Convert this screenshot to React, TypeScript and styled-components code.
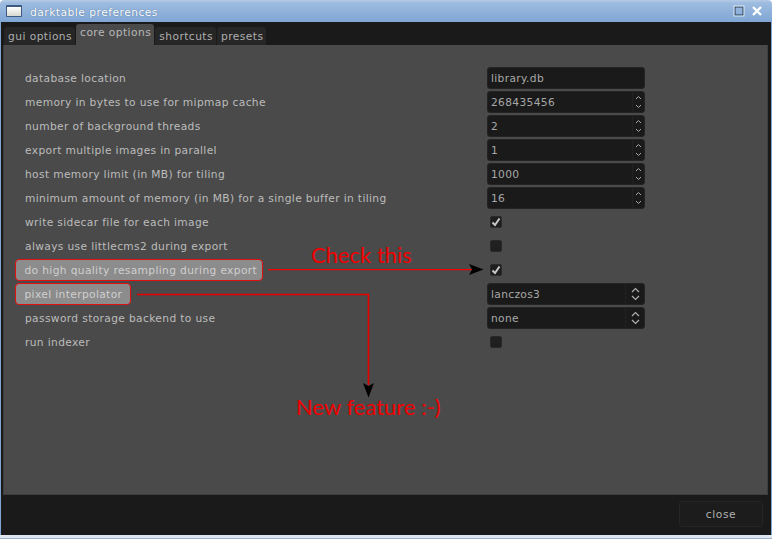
import React from "react";
import styled, { createGlobalStyle } from "styled-components";

const GlobalStyle = createGlobalStyle`
    html, body {
        margin: 0;
        padding: 0;
        background: #fff;
    }
    body {
        font-family: "DejaVu Sans", sans-serif;
    }
`;

const Window = styled.div`
    position: relative;
    width: 772px;
    height: 539px;
    display: flex;
    flex-direction: column;
    box-sizing: border-box;
    overflow: hidden;
    background: #dfe6f0;
    border-radius: 4px 4px 0 0;
`;
const TitleBar = styled.div`
    height: 22px;
    flex: none;
    display: flex;
    align-items: center;
    padding: 0 9px 0 6px;
    background: linear-gradient(#b5cbe6 0, #9dbbdf 3px, #7fa6d5 100%);
    border-radius: 4px 4px 0 0;
`;
const TitleIcon = styled.div`
    width: 14px;
    height: 9px;
    border: 1px solid #3c5a80;
    border-top-width: 2px;
    border-radius: 1px;
    background: linear-gradient(#ffffff, #d8d8d0);
    margin-right: 8px;
    margin-top: -1px;
`;
const Title = styled.span`
    flex: 1;
    font-size: 10.67px;
    letter-spacing: 0.5px;
    padding-top: 2px;
    color: #fff;
    text-shadow: 0 0 1px #3c5a80;
`;
const WinButton = styled.svg`
    width: 12px;
    height: 12px;
    margin-left: 6px;
    flex: none;
`;
const Body = styled.div`
    flex: 1;
    display: flex;
    flex-direction: column;
    background: #1a1a1a;
    border-left: 1px solid #7fa6d5;
    border-right: 1px solid #7fa6d5;
`;
const TabBar = styled.div`
    height: 22px;
    margin-top: 1px;
    padding-left: 3px;
    display: flex;
    align-items: flex-end;
`;
const Tab = styled.div<{ $active?: boolean }>`
    height: ${(p) => (p.$active ? "21px" : "18px")};
    box-sizing: border-box;
    padding: ${(p) => (p.$active ? "2px 3px 0 4px" : "3px 3px 0 4px")};
    margin-right: 1px;
    font-size: 10.67px;
    letter-spacing: 0.45px;
    line-height: 14px;
    border-radius: 3px 3px 0 0;
    color: ${(p) => (p.$active ? "#b8b8b8" : "#aeaeae")};
    background: ${(p) => (p.$active ? "#4a4a4a" : "#262626")};
    white-space: nowrap;
`;
const Panel = styled.div`
    height: 450px;
    margin: 0 3px 0 2px;
    box-sizing: border-box;
    padding: 21px 0 0 21px;
    background: #4a4a4a;
    border: 1px solid #3e3e3e;
    border-top: none;
`;
const Row = styled.div`
    height: 24px;
    display: flex;
    align-items: center;
`;
const LabelCell = styled.div`
    width: 462px;
    flex: none;
    display: flex;
    align-items: center;
`;
const Label = styled.span<{ $marked?: boolean; $tail?: number }>`
    font-size: 10.67px;
    letter-spacing: 0.36px;
    padding-top: 1px;
    color: ${(p) => (p.$marked ? "#cfcfcf" : "#bcbcbc")};
    white-space: nowrap;
    line-height: ${(p) => (p.$marked ? "19px" : "14px")};
    ${(p) =>
        p.$marked &&
        `
        background: #8c8c8c;
        border: 1.5px solid #e01010;
        border-radius: 4px;
        margin-left: -10px;
        padding-left: 8.5px;
        padding-right: ${p.$tail}px;
    `}
`;
const Field = styled.div`
    width: 158px;
    height: 22px;
    box-sizing: border-box;
    display: flex;
    align-items: center;
    background: #1a1a1a;
    border: 1px solid #242424;
    border-radius: 3px;
    font-size: 10.67px;
    letter-spacing: 0.33px;
    color: #a8a8a8;
`;
const FieldText = styled.span`
    flex: 1;
    padding-left: 3px;
`;
const Stepper = styled.svg`
    width: 11px;
    height: 20px;
    flex: none;
    border-left: 1px solid #222;
`;
const ComboArrows = styled.svg`
    width: 18px;
    height: 20px;
    flex: none;
    border-left: 1px solid #222;
`;
const CheckBox = styled.div`
    width: 12px;
    height: 12px;
    box-sizing: border-box;
    margin-left: 3px;
    background: #1f1f1f;
    border: 1px solid #2a2a2a;
    border-radius: 2px;
    display: flex;
    align-items: center;
    justify-content: center;
`;
const Footer = styled.div`
    flex: 1;
    display: flex;
    justify-content: flex-end;
    padding: 6px 8px 0 0;
`;
const CloseButton = styled.div`
    width: 84px;
    height: 26px;
    box-sizing: border-box;
    background: #1c1c1c;
    border: 1px solid #252525;
    border-radius: 3px;
    text-align: center;
    font-size: 10.67px;
    letter-spacing: 0.6px;
    line-height: 25px;
    color: #b0b0b0;
`;
const BottomEdge = styled.div`
    height: 4px;
    flex: none;
    background: #dfe6f0;
    border-bottom: 1px solid #9db4d0;
    box-sizing: border-box;
`;
const Arrows = styled.svg`
    position: absolute;
    left: 0;
    top: 0;
    pointer-events: none;
`;
const Note = styled.span<{ $x: number; $y: number }>`
    position: absolute;
    left: ${(p) => p.$x}px;
    top: ${(p) => p.$y}px;
    font-family: "Lato", sans-serif;
    font-size: 22px;
    line-height: 26px;
    color: #f00000;
    white-space: nowrap;
`;

type Setting = {
    label: string;
    kind: "text" | "spin" | "combo" | "check";
    value?: string;
    checked?: boolean;
    tail?: number;
};

const settings: Setting[] = [
    { label: "database location", kind: "text", value: "library.db" },
    { label: "memory in bytes to use for mipmap cache", kind: "spin", value: "268435456" },
    { label: "number of background threads", kind: "spin", value: "2" },
    { label: "export multiple images in parallel", kind: "spin", value: "1" },
    { label: "host memory limit (in MB) for tiling", kind: "spin", value: "1000" },
    { label: "minimum amount of memory (in MB) for a single buffer in tiling", kind: "spin", value: "16" },
    { label: "write sidecar file for each image", kind: "check", checked: true },
    { label: "always use littlecms2 during export", kind: "check" },
    { label: "do high quality resampling during export", kind: "check", checked: true, tail: 5 },
    { label: "pixel interpolator", kind: "combo", value: "lanczos3", tail: 8 },
    { label: "password storage backend to use", kind: "combo", value: "none" },
    { label: "run indexer", kind: "check" },
];

const Control = ({ item }: { item: Setting }): JSX.Element => {
    if (item.kind === "check") {
        return (
            <CheckBox>
                {item.checked && (
                    <svg width="10" height="10" viewBox="0 0 10 10">
                        <path d="M1.5 5.5 L4 8 L8.5 1.5" fill="none" stroke="#c8c8c8" strokeWidth="2" />
                    </svg>
                )}
            </CheckBox>
        );
    }
    return (
        <Field>
            <FieldText>{item.value}</FieldText>
            {item.kind === "spin" && (
                <Stepper viewBox="0 0 11 20">
                    <path d="M3 7 L5.5 4.5 L8 7 M3 13 L5.5 15.5 L8 13" fill="none" stroke="#a8a8a8" />
                </Stepper>
            )}
            {item.kind === "combo" && (
                <ComboArrows viewBox="0 0 18 20">
                    <path d="M6 8 L9.5 4.5 L13 8 M6 12 L9.5 15.5 L13 12" fill="none" stroke="#b0b0b0" strokeWidth="1.2" />
                </ComboArrows>
            )}
        </Field>
    );
};

const App = (): JSX.Element => {
    return (
        <>
            <GlobalStyle />
            <Window>
                <TitleBar>
                    <TitleIcon />
                    <Title>darktable preferences</Title>
                    <WinButton viewBox="0 0 12 12">
                        <rect x="2" y="2" width="8" height="8" fill="none" stroke="#24384f" strokeWidth="1" />
                        <rect x="1" y="1" width="10" height="10" fill="none" stroke="#fff" strokeWidth="1" opacity="0.7" />
                    </WinButton>
                    <WinButton viewBox="0 0 12 12">
                        <path d="M2 2 L10 10 M10 2 L2 10" stroke="#fff" strokeWidth="2.4" />
                    </WinButton>
                </TitleBar>
                <Body>
                    <TabBar>
                        <Tab>gui options</Tab>
                        <Tab $active>core options</Tab>
                        <Tab>shortcuts</Tab>
                        <Tab>presets</Tab>
                    </TabBar>
                    <Panel>
                        {settings.map((item) => (
                            <Row key={item.label}>
                                <LabelCell>
                                    <Label $marked={item.tail !== undefined} $tail={item.tail}>
                                        {item.label}
                                    </Label>
                                </LabelCell>
                                <Control item={item} />
                            </Row>
                        ))}
                    </Panel>
                    <Footer>
                        <CloseButton>close</CloseButton>
                    </Footer>
                </Body>
                <BottomEdge />
                <Arrows width="772" height="539" viewBox="0 0 772 539">
                    <path d="M268 269.6 H472" fill="none" stroke="#f00000" strokeWidth="1.4" />
                    <path d="M137 294.5 H368.5 V385" fill="none" stroke="#e80000" strokeWidth="1.6" />
                    <path d="M469 264 L483.5 269.5 L469 275 L472 269.5 Z" fill="#000" />
                    <path d="M363 383 L368.5 397.5 L374 383 L368.5 386 Z" fill="#000" />
                </Arrows>
                <Note $x={311} $y={242}>Check this</Note>
                <Note $x={296} $y={394}>New feature :-)</Note>
            </Window>
        </>
    );
};

export default App;
